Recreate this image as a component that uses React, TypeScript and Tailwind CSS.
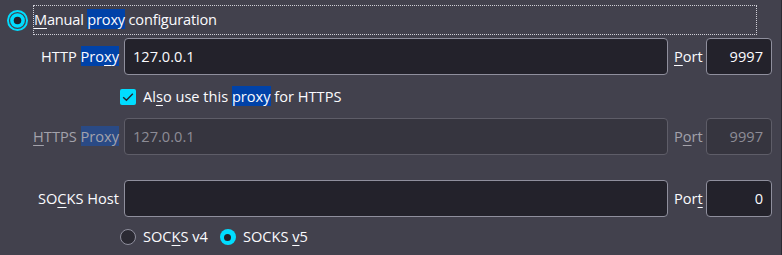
import type { ReactNode } from 'react';

// Firefox-style dark "Connection Settings" proxy panel

const Ak = ({ children }: { children: ReactNode }) => (
  <span className="underline decoration-1 underline-offset-[3px]">{children}</span>
);

const Hl = ({ children, dim }: { children: ReactNode; dim?: boolean }) => (
  <span className={dim ? 'bg-[#2a4a85]' : 'bg-[#0042a8]'}>{children}</span>
);

function TextField({ value, disabled, right }: { value: string; disabled?: boolean; right?: boolean }) {
  return (
    <div
      className={`h-[37px] rounded-[4px] border flex items-center px-[8px] ${
        disabled
          ? 'bg-[#36353f] border-[#5e5d68] text-[#8d8c96]'
          : 'bg-[#23222b] border-[#8f8f9d] text-[#fbfbfe]'
      } ${right ? 'justify-end' : ''}`}
    >
      {value}
    </div>
  );
}

function Radio({ checked }: { checked?: boolean }) {
  return checked ? (
    <span className="w-4 h-4 rounded-full bg-[#00ddff] flex items-center justify-center">
      <span className="w-[7px] h-[7px] rounded-full bg-[#23222b]" />
    </span>
  ) : (
    <span className="w-4 h-4 rounded-full bg-[#2b2a33] border border-[#8f8f9d]" />
  );
}

function Row({
  label,
  value,
  port,
  portLabel,
  disabled,
}: {
  label: ReactNode;
  value: string;
  port: string;
  portLabel: ReactNode;
  disabled?: boolean;
}) {
  return (
    <div className={`grid grid-cols-[120px_1fr_38px_66px] items-center ${disabled ? 'text-[#a3a2ab]' : ''}`}>
      <div className="text-right pr-px whitespace-nowrap">{label}</div>
      <div className="ml-1">
        <TextField value={value} disabled={disabled} />
      </div>
      <div className="pl-[6px] whitespace-nowrap">{portLabel}</div>
      <TextField value={port} disabled={disabled} right />
    </div>
  );
}

export default function App() {
  return (
    <div
      className="w-[782px] h-[255px] bg-[#42414d] text-[#fbfbfe] text-[14.6px] overflow-hidden border-r border-[#2b2a33] pr-[9px]"
      style={{ fontFamily: '"Open Sans", "Noto Sans", sans-serif' }}
    >
      {/* Manual proxy radio, focused */}
      <div className="flex items-center h-[30px] mt-[5px] pl-[7px]">
        <svg width="21" height="21" viewBox="0 0 20 20" className="shrink-0">
          <circle cx="10" cy="10" r="10" fill="#00ddff" />
          <circle cx="10" cy="10" r="7.6" fill="none" stroke="#42414d" strokeWidth="1.2" />
          <circle cx="10" cy="10" r="3.6" fill="#23222b" />
        </svg>
        <div className="ml-[5px] flex-1 h-full border border-dotted border-[#d0d0d8] flex items-center mr-[15px]">
          <span className="tracking-[-0.2px]">
            <Ak>M</Ak>anual <Hl>proxy</Hl> configuration
          </span>
        </div>
      </div>

      <div className="mt-[3px]">
        <Row
          label={
            <>
              HTTP <Hl>Pro<Ak>x</Ak>y</Hl>
            </>
          }
          value="127.0.0.1"
          port="9997"
          portLabel={
            <>
              <Ak>P</Ak>ort
            </>
          }
        />
      </div>

      <div className="flex items-center ml-[120px] h-[22px] mt-[11px]">
        <span className="w-4 h-4 rounded-[2px] bg-[#00ddff] flex items-center justify-center">
          <svg width="14" height="14" viewBox="0 0 16 16" fill="none">
            <path d="M2.5 8.2 L6.2 11.8 L13.5 4.3" stroke="#23222b" strokeWidth="1.6" />
          </svg>
        </span>
        <span className="ml-[7px]">
          Al<Ak>s</Ak>o use this <Hl>proxy</Hl> for HTTPS
        </span>
      </div>

      <div className="mt-[10px]">
        <Row
          disabled
          label={
            <>
              <Ak>H</Ak>TTPS <Hl dim>Proxy</Hl>
            </>
          }
          value="127.0.0.1"
          port="9997"
          portLabel={
            <>
              P<Ak>o</Ak>rt
            </>
          }
        />
      </div>

      <div className="mt-[25px]">
        <Row
          label={
            <>
              SO<Ak>C</Ak>KS Host
            </>
          }
          value=""
          port="0"
          portLabel={
            <>
              Por<Ak>t</Ak>
            </>
          }
        />
      </div>

      <div className="flex items-center ml-[120px] h-[22px] mt-[9px]">
        <Radio />
        <span className="ml-[7px]">
          SOC<Ak>K</Ak>S v4
        </span>
        <span className="ml-[12px]">
          <Radio checked />
        </span>
        <span className="ml-[7px]">
          SOCKS <Ak>v</Ak>5
        </span>
      </div>
    </div>
  );
}
